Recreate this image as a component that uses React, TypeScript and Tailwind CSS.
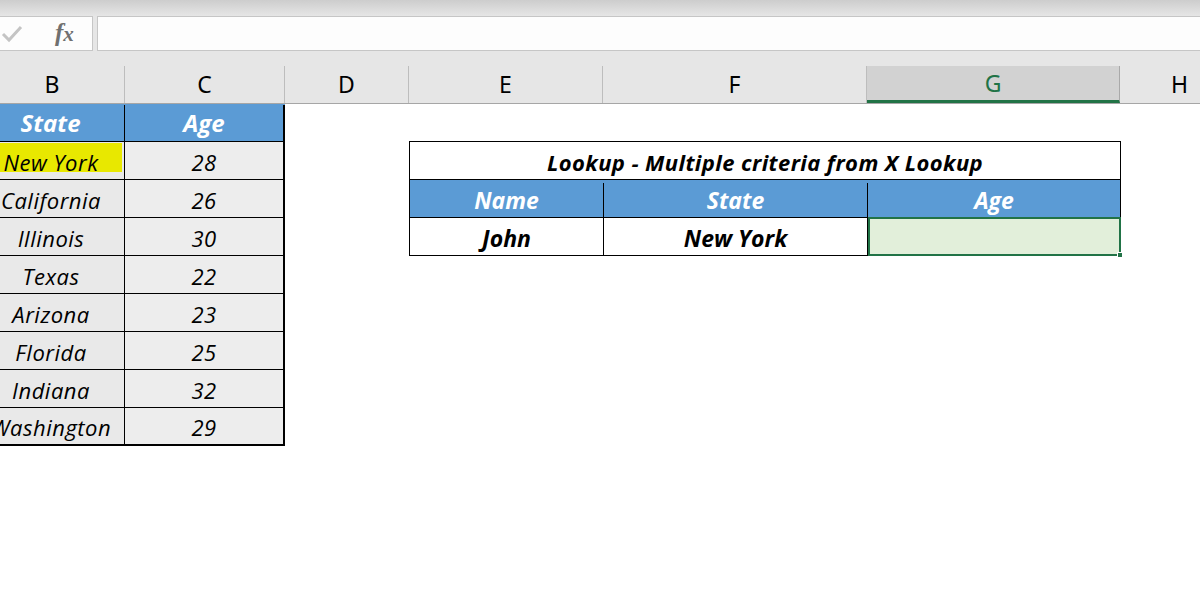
import React from "react";

const rows: [string, string][] = [
  ["New York", "28"],
  ["California", "26"],
  ["Illinois", "30"],
  ["Texas", "22"],
  ["Arizona", "23"],
  ["Florida", "25"],
  ["Indiana", "32"],
  ["Washington", "29"],
];

const headers: { l: string; w: string; sel?: boolean }[] = [
  { l: "B", w: "w-[145px]" },
  { l: "C", w: "w-[160px]" },
  { l: "D", w: "w-[124px]" },
  { l: "E", w: "w-[194px]" },
  { l: "F", w: "w-[264px]" },
  { l: "G", w: "w-[253px]", sel: true },
  { l: "H", w: "w-[120px]" },
];

export default function App() {
  return (
    <div className="w-[1200px] h-[593px] overflow-hidden bg-white font-['Open_Sans',sans-serif] text-black">
      {/* top gradient */}
      <div className="h-[16px] bg-gradient-to-b from-[#cdcdcd] to-[#e6e6e6]" />
      {/* formula bar */}
      <div className="h-[35px] bg-[#e6e6e6] flex">
        <div className="w-[93px] h-full border border-l-0 border-[#c6c6c6] bg-[#fdfdfd] flex items-center relative">
          <svg width="22" height="18" viewBox="0 0 22 18" className="absolute left-[1px] top-[8px]">
            <polyline points="2,9 8,15 20,2" fill="none" stroke="#c4c4c4" strokeWidth="3" />
          </svg>
          <span className="absolute left-[55px] top-[3px] font-['Liberation_Serif',serif] italic font-bold text-[25px] leading-[26px] text-[#707070]">
            f<span className="text-[21px]">x</span>
          </span>
        </div>
        <div className="ml-[4px] flex-1 h-full border border-r-0 border-[#c6c6c6] bg-[#fdfdfd]" />
      </div>
      <div className="h-[15px] bg-[#e6e6e6]" />
      {/* column headers */}
      <div className="h-[38px] bg-[#e6e6e6] border-b border-[#a6a6a6] flex ml-[-20px] font-['Noto_Sans',sans-serif]">
        {headers.map((h) => (
          <div
            key={h.l}
            className={
              h.sel
                ? `${h.w} shrink-0 h-full bg-[#d2d2d2] border-r border-[#a9a9a9] border-b-[3px] border-b-[#217346] flex items-center justify-center text-[23px] text-[#217346]`
                : `${h.w} shrink-0 h-full border-r border-[#bdbdbd] flex items-center justify-center text-[23px] text-black`
            }
          >
            {h.l}
          </div>
        ))}
      </div>
      {/* body */}
      <div className="flex ml-[-20px] items-start">
        {/* left table */}
        <div className="w-[305px] shrink-0 flex flex-col">
          <div className="h-[38px] flex bg-[#5b9bd5] border-b border-black text-white font-bold italic text-[24px] pt-[1px]">
            <div className="w-[145px] border-r border-black flex items-center justify-center pr-[3px]">State</div>
            <div className="w-[160px] border-r-2 border-black flex items-center justify-center">Age</div>
          </div>
          {rows.map(([s, a], i) => (
            <div
              key={s}
              className={`h-[38px] flex italic text-[22px] tracking-[0.5px] ${i === rows.length - 1 ? "border-b-2" : "border-b"} border-black`}
            >
              <div className="w-[145px] border-r border-black bg-[#e9e9e9] flex items-center justify-center relative pt-[3px] pr-[2px]">
                {i === 0 && <div className="absolute left-[20px] top-[1px] w-[122px] h-[29px] bg-[#e8e800]" />}
                <span className="relative">{s}</span>
              </div>
              <div className="w-[160px] border-r-2 border-black bg-[#ededed] flex items-center justify-center pt-[3px]">{a}</div>
            </div>
          ))}
        </div>
        {/* column D spacer */}
        <div className="w-[124px] shrink-0" />
        {/* right table */}
        <div className="w-[712px] shrink-0 mt-[37px] border-t border-l border-r border-black flex flex-col font-bold italic">
          <div className="h-[38px] border-b border-black flex items-center justify-center text-[22px] tracking-[0.4px] pt-[3px]">
            Lookup - Multiple criteria from X Lookup
          </div>
          <div className="h-[38px] border-b border-black flex bg-[#5b9bd5] text-white text-[23px] pt-[3px]">
            <div className="w-[194px] border-r border-black flex items-center justify-center">Name</div>
            <div className="w-[264px] border-r border-black flex items-center justify-center">State</div>
            <div className="flex-1 flex items-center justify-center">Age</div>
          </div>
          <div className="h-[38px] border-b border-black flex text-[23px]">
            <div className="w-[194px] border-r border-black flex items-center justify-center pt-[3px]">John</div>
            <div className="w-[264px] border-r border-black flex items-center justify-center pt-[3px]">New York</div>
            <div className="flex-1 relative bg-[#e2efda] border-2 border-[#217346] -mt-[1px] -mb-[1px] -mr-[1px]">
              <div className="absolute right-[-4px] bottom-[-4px] w-[6px] h-[6px] bg-[#217346] border border-white" />
            </div>
          </div>
        </div>
      </div>
    </div>
  );
}
